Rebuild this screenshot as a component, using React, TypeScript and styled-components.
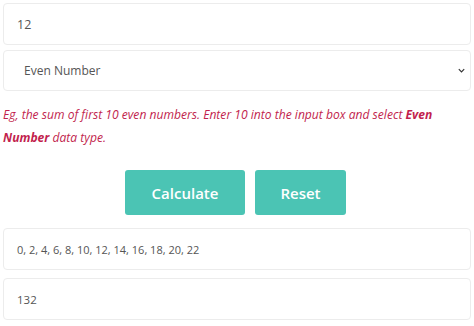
import styled, { createGlobalStyle } from "styled-components";

const GlobalStyle = createGlobalStyle`
  body {
    margin: 0;
    background: #ffffff;
    font-family: "Open Sans", "Liberation Sans", sans-serif;
  }
`;

const Page = styled.div`
  width: 474px;
  padding: 3px 3px 0;
  box-sizing: border-box;
  display: flex;
  flex-direction: column;
`;

const Field = styled.div<{ $indent?: number; $size?: number }>`
  height: 42px;
  box-sizing: border-box;
  border: 1px solid #ececec;
  border-radius: 4px;
  display: flex;
  align-items: center;
  padding-left: ${(p) => p.$indent ?? 12}px;
  padding-right: 4px;
  font-size: ${(p) => p.$size ?? 12}px;
  color: #555;
  background: #fff;
`;

const SelectField = styled(Field)`
  justify-content: space-between;
  margin-top: 5px;
  height: 41px;
`;

const Chevron = styled.svg`
  width: 9px;
  height: 9px;
`;

const Hint = styled.p`
  margin: 12px 0 0;
  font-size: 12.1px;
  font-style: italic;
  line-height: 23px;
  color: #c21f4e;

  b {
    font-weight: 700;
  }
`;

const Actions = styled.div`
  display: flex;
  justify-content: center;
  gap: 10px;
  margin-top: 21px;
  padding-right: 3px;
`;

const Button = styled.button<{ $width: number }>`
  width: ${(p) => p.$width}px;
  height: 45px;
  border: none;
  border-radius: 3px;
  background: #4bc4b4;
  color: #fff;
  font-family: "Open Sans", "Liberation Sans", sans-serif;
  font-size: 15px;
  font-weight: 600;
  cursor: pointer;
`;

const ResultField = styled(Field)`
  margin-top: 13px;
`;

const TotalField = styled(Field)`
  margin-top: 8px;
`;

export default function App() {
  return (
    <>
      <GlobalStyle />
      <Page>
        <Field $indent={13} $size={12.5}>12</Field>
        <SelectField $indent={20} $size={12}>
          <span>Even Number</span>
          <Chevron viewBox="0 0 10 10">
            <path d="M2 3.5 L5 6.5 L8 3.5" fill="none" stroke="#333" strokeWidth="1.3" />
          </Chevron>
        </SelectField>
        <Hint>
          Eg, the sum of first 10 even numbers. Enter 10 into the input box and select <b>Even</b>{" "}
          <b>Number</b> data type.
        </Hint>
        <Actions>
          <Button $width={120}>Calculate</Button>
          <Button $width={91}>Reset</Button>
        </Actions>
        <ResultField $indent={13} $size={11}>0, 2, 4, 6, 8, 10, 12, 14, 16, 18, 20, 22</ResultField>
        <TotalField $indent={13} $size={11.5}>132</TotalField>
      </Page>
    </>
  );
}
